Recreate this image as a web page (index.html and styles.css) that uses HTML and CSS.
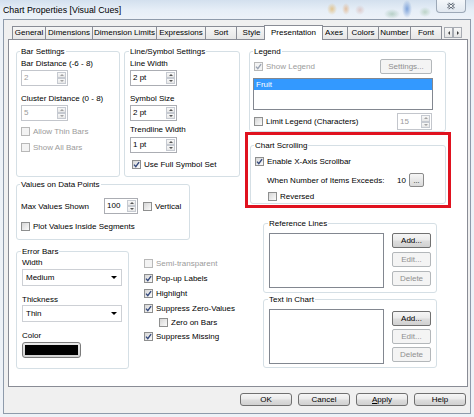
FILE: index.html
```html
<!DOCTYPE html>
<html>
<head>
<meta charset="utf-8">
<title>Chart Properties</title>
<link rel="stylesheet" href="styles.css">
</head>
<body>
<div class="window">
  <div class="titlebar">
    <span class="title">Chart Properties [Visual Cues]</span>
    <div class="close">
      <svg width="10" height="8" viewBox="0 0 10 8"><path d="M2 1.5 L8 6.5 M8 1.5 L2 6.5" stroke="#5a6573" stroke-width="2.6" fill="none"/><path d="M2 1.5 L8 6.5 M8 1.5 L2 6.5" stroke="#ffffff" stroke-width="1" fill="none"/></svg>
    </div>
  </div>
  <div class="client">
    <div class="tabs">
      <div class="tab t1">General</div>
      <div class="tab t2">Dimensions</div>
      <div class="tab t3">Dimension Limits</div>
      <div class="tab t4">Expressions</div>
      <div class="tab t5">Sort</div>
      <div class="tab t6">Style</div>
      <div class="tab sel">Presentation</div>
      <div class="tab t8">Axes</div>
      <div class="tab t9">Colors</div>
      <div class="tab t10">Number</div>
      <div class="tab t11">Font</div>
      <div class="tabscroll"><span class="ts ts-left"></span><span class="ts ts-right"></span></div>
    </div>
    <div class="panel">
      <div class="col-left">
        <div class="row1">
          <div class="grp g-bar">
            <div class="gtitle">Bar Settings</div>
            <div class="lbl mt1">Bar Distance (-6 - 8)</div>
            <div class="spin dis w47 mt1"><span class="val">2</span><span class="arr"><i class="up"></i><i class="dn"></i></span></div>
            <div class="lbl mt7">Cluster Distance (0 - 8)</div>
            <div class="spin dis w47 mt1"><span class="val">5</span><span class="arr"><i class="up"></i><i class="dn"></i></span></div>
            <div class="row mt5 gray"><span class="cb dis"></span>Allow Thin Bars</div>
            <div class="row mt5 gray"><span class="cb dis"></span>Show All Bars</div>
          </div>
          <div class="grp g-line">
            <div class="gtitle">Line/Symbol Settings</div>
            <div class="lbl mt1">Line Width</div>
            <div class="spin w47 mt1"><span class="val">2 pt</span><span class="arr"><i class="up"></i><i class="dn"></i></span></div>
            <div class="lbl mt7">Symbol Size</div>
            <div class="spin w47 mt1"><span class="val">2 pt</span><span class="arr"><i class="up"></i><i class="dn"></i></span></div>
            <div class="lbl mt3">Trendline Width</div>
            <div class="spin w47 mt2"><span class="val">1 pt</span><span class="arr"><i class="up"></i><i class="dn"></i></span></div>
            <div class="row mt6 ind2"><span class="cb"><svg viewBox="0 0 7 7"><path d="M1 3.6 L2.8 5.6 L6.1 1.2"/></svg></span>Use Full Symbol Set</div>
          </div>
        </div>
        <div class="grp g-values">
          <div class="gtitle">Values on Data Points</div>
          <div class="vrow">
            <span class="vlabel">Max Values Shown</span>
            <div class="spin w34"><span class="val">100</span><span class="arr"><i class="up"></i><i class="dn"></i></span></div>
            <span class="row ml5"><span class="cb"></span>Vertical</span>
          </div>
          <div class="row mt7"><span class="cb"></span>Plot Values Inside Segments</div>
        </div>
        <div class="row-err">
          <div class="grp g-err">
            <div class="gtitle">Error Bars</div>
            <div class="lbl">Width</div>
            <div class="combo mt1"><span>Medium</span><i class="drop"></i></div>
            <div class="lbl mt8">Thickness</div>
            <div class="combo"><span>Thin</span><i class="drop"></i></div>
            <div class="lbl mt8">Color</div>
            <div class="colorbtn mt1"><span></span></div>
          </div>
          <div class="cbcol">
            <div class="row r15 gray"><span class="cb dis"></span>Semi-transparent</div>
            <div class="row r15"><span class="cb"><svg viewBox="0 0 7 7"><path d="M1 3.6 L2.8 5.6 L6.1 1.2"/></svg></span>Pop-up Labels</div>
            <div class="row r15"><span class="cb"><svg viewBox="0 0 7 7"><path d="M1 3.6 L2.8 5.6 L6.1 1.2"/></svg></span>Highlight</div>
            <div class="row r15"><span class="cb"><svg viewBox="0 0 7 7"><path d="M1 3.6 L2.8 5.6 L6.1 1.2"/></svg></span>Suppress Zero-Values</div>
            <div class="row r13 ind15"><span class="cb"></span>Zero on Bars</div>
            <div class="row r15"><span class="cb"><svg viewBox="0 0 7 7"><path d="M1 3.6 L2.8 5.6 L6.1 1.2"/></svg></span>Suppress Missing</div>
          </div>
        </div>
      </div>
      <div class="col-right">
        <div class="grp g-legend">
          <div class="gtitle">Legend</div>
          <div class="lrow mt2">
            <span class="row gray"><span class="cb dis"><svg viewBox="0 0 7 7"><path d="M1 3.6 L2.8 5.6 L6.1 1.2"/></svg></span>Show Legend</span>
            <span class="btn dis w52">Settings...</span>
          </div>
          <div class="list l-legend mt4"><div class="item-sel">Fruit</div></div>
          <div class="lrow2 mt3">
            <span class="row"><span class="cb"></span>Limit Legend (Characters)</span>
            <div class="spin dis w35 h17"><span class="val">15</span><span class="arr"><i class="up"></i><i class="dn"></i></span></div>
          </div>
        </div>
        <div class="hl">
          <div class="grp g-scroll">
            <div class="gtitle">Chart Scrolling</div>
            <div class="row mt5"><span class="cb"><svg viewBox="0 0 7 7"><path d="M1 3.6 L2.8 5.6 L6.1 1.2"/></svg></span>Enable X-Axis Scrollbar</div>
            <div class="nrow mt6"><span class="nlabel">When Number of Items Exceeds:</span><span class="num">10</span><span class="dots">...</span></div>
            <div class="row mt4 ind13"><span class="cb"></span>Reversed</div>
          </div>
        </div>
        <div class="grp g-ref">
          <div class="gtitle">Reference Lines</div>
          <div class="lb-row mt4">
            <div class="list l-box"></div>
            <div class="btncol gap4">
              <span class="btn w39">Add...</span>
              <span class="btn dis w39">Edit...</span>
              <span class="btn dis w39">Delete</span>
            </div>
          </div>
        </div>
        <div class="grp g-text">
          <div class="gtitle">Text in Chart</div>
          <div class="lb-row mt4">
            <div class="list l-box"></div>
            <div class="btncol gap3 mt2">
              <span class="btn w39">Add...</span>
              <span class="btn dis w39">Edit...</span>
              <span class="btn dis w39">Delete</span>
            </div>
          </div>
        </div>
      </div>
    </div>
    <div class="buttons">
      <span class="btn bb">OK</span>
      <span class="btn bb">Cancel</span>
      <span class="btn bb"><u>A</u>pply</span>
      <span class="btn bb">Help</span>
    </div>
  </div>
</div>
</body>
</html>
```

FILE: styles.css
```css
* { box-sizing: border-box; }
html, body { margin: 0; padding: 0; background: #ffffff; }

.window {
  width: 474px;
  height: 417px;
  overflow: hidden;
  display: flex;
  flex-direction: column;
  font-family: "Liberation Sans", Arial, sans-serif;
  font-size: 8px;
  color: #000000;
  background:
    radial-gradient(5px 6px at 332px 9px, rgba(225, 165, 60, 0.55), rgba(225, 165, 60, 0)),
    radial-gradient(4px 6px at 346px 9px, rgba(225, 140, 60, 0.45), rgba(225, 140, 60, 0)),
    radial-gradient(5px 5px at 360px 10px, rgba(200, 120, 100, 0.3), rgba(200, 120, 100, 0)),
    radial-gradient(8px 5px at 392px 14px, rgba(90, 150, 110, 0.35), rgba(90, 150, 110, 0)),
    radial-gradient(5px 9px at 407px 9px, rgba(60, 115, 200, 0.6), rgba(60, 115, 200, 0)),
    radial-gradient(6px 5px at 425px 12px, rgba(90, 150, 90, 0.3), rgba(90, 150, 90, 0)),
    linear-gradient(#d3e0ee 0, #e6eef7 10px, #edf2f8 19px, #eef2f7 100%);
}

.titlebar {
  height: 19px;
  flex: none;
  display: flex;
  justify-content: space-between;
  align-items: flex-start;
  padding-left: 3px;
}
.title { font-size: 8.8px; line-height: 14px; padding-top: 3px; color: #000; }
.close {
  width: 30px;
  height: 13px;
  margin-right: 8px;
  border: 1px solid #9ca8b7;
  border-top: none;
  border-radius: 0 0 4px 4px;
  background: linear-gradient(#f4f7fa, #e1e8f0);
  display: flex;
  align-items: center;
  justify-content: center;
}

.client {
  margin: 0 3px;
  height: 395px;
  border: 1px solid #8e9bab;
  background: #f0f0f0;
  padding: 5px 2px 0 4px;
}

/* tabs */
.tabs { display: flex; align-items: flex-end; height: 14px; padding-left: 4px; }
.tab {
  height: 13px;
  border: 1px solid #898c95;
  border-bottom: none;
  margin-right: -1px;
  background: linear-gradient(#f6f6f6, #e6e6e6);
  text-align: center;
  line-height: 12px;
  white-space: nowrap;
  color: #000;
}
.t1 { width: 34px; }
.t2 { width: 48px; }
.t3 { width: 65px; }
.t4 { width: 50px; }
.t5 { width: 32px; }
.t6 { width: 31px; }
.tab.sel {
  width: 59px;
  height: 15px;
  margin: 0 -3px -1px -2px;
  background: #ffffff;
  position: relative;
  z-index: 1;
  line-height: 13px;
}
.t8 { width: 28px; }
.t9 { width: 32px; }
.t10 { width: 33px; }
.t11 { width: 32px; }
.tabscroll { display: flex; gap: 0; margin-left: 3px; margin-bottom: 1px; }
.ts {
  width: 9px;
  height: 11px;
  border: 1px solid #a7abb2;
  background: linear-gradient(#f7f7f7, #e4e4e4);
  display: flex;
  align-items: center;
  justify-content: center;
}
.ts-left::before { content: ""; border-top: 2px solid transparent; border-bottom: 2px solid transparent; border-right: 2px solid #404040; }
.ts-right::before { content: ""; border-top: 2px solid transparent; border-bottom: 2px solid transparent; border-left: 2px solid #404040; }

.panel {
  height: 348px;
  border: 1px solid #898c95;
  background: #ffffff;
  display: flex;
  padding: 11px 0 0 7px;
}

.col-left { width: 224px; flex: none; }
.col-right { width: 206px; flex: none; margin-left: 5px; }

/* groups */
.grp { border: 1px solid #d5dfe5; border-radius: 3px; }
.gtitle {
  display: table;
  margin: -6px 0 0 -1px;
  padding: 0 1px;
  background: #ffffff;
  line-height: 11px;
  white-space: nowrap;
}
.lbl { line-height: 11px; height: 11px; white-space: nowrap; }
.row { display: flex; align-items: center; height: 11px; white-space: nowrap; }
.gray { color: #9b9b9b; }

.mt1 { margin-top: 1px; }
.mt2 { margin-top: 2px; }
.mt3 { margin-top: 3px; }
.mt4 { margin-top: 4px; }
.mt5 { margin-top: 5px; }
.mt6 { margin-top: 6px; }
.mt7 { margin-top: 7px; }
.mt8 { margin-top: 8px; }
.ml5 { margin-left: 5px; }
.ind2 { padding-left: 2px; }
.ind13 { padding-left: 13px; }
.ind15 { padding-left: 15px; }

/* checkbox */
.cb {
  width: 9px;
  height: 9px;
  flex: none;
  border: 1px solid #8e8f8f;
  background: linear-gradient(135deg, #d6d6d6, #fbfbfb);
  margin-right: 3px;
  display: flex;
}
.cb svg { width: 7px; height: 7px; }
.cb path { fill: none; stroke: #34497c; stroke-width: 1.4; }
.cb.dis { border-color: #b8b8b8; background: #f3f3f3; }
.cb.dis path { stroke: #9aa3b2; }

/* spinner */
.spin { height: 16px; display: flex; border: 1px solid #abadb3; background: #ffffff; flex: none; }
.spin .val { flex: 1; padding-left: 2px; line-height: 14px; color: #000000; }
.spin.dis { border-color: #c3c6cc; }
.spin.dis .val { color: #9b9b9b; }
.spin .arr { width: 10px; display: flex; flex-direction: column; padding: 1px 1px 1px 0; }
.spin .arr i {
  flex: 1;
  border: 1px solid #c6cad1;
  background: linear-gradient(#f8f8f8, #e7e7e7);
  display: flex;
  align-items: center;
  justify-content: center;
}
.spin .arr i.up::before { content: ""; border-left: 2px solid transparent; border-right: 2px solid transparent; border-bottom: 2px solid #555555; }
.spin .arr i.dn::before { content: ""; border-left: 2px solid transparent; border-right: 2px solid transparent; border-top: 2px solid #555555; }
.spin.dis .arr i::before { opacity: 0.5; }
.w47 { width: 47px; }
.w34 { width: 34px; }
.w35 { width: 35px; }
.h17 { height: 17px; }
.h17 .val { line-height: 15px; }

/* group specifics */
.row1 { display: flex; gap: 4px; }
.g-bar { width: 104px; height: 126px; padding: 0 4px; }
.g-line { width: 116px; height: 126px; padding: 0 5px; }
.g-values { width: 174px; height: 56px; margin-top: 7px; padding: 0 4px; }
.vrow { display: flex; align-items: center; height: 16px; margin-top: 8px; }
.vlabel { width: 83px; flex: none; white-space: nowrap; }

.row-err { display: flex; align-items: flex-start; margin-top: 11px; }
.g-err { width: 113px; height: 118px; padding: 0 5px; flex: none; }
.combo {
  width: 100px;
  height: 17px;
  border: 1px solid #cdd0d5;
  background: #ffffff;
  display: flex;
  align-items: center;
  justify-content: space-between;
  padding: 0 4px 0 3px;
}
.drop { border-left: 3px solid transparent; border-right: 3px solid transparent; border-top: 3px solid #000000; }
.colorbtn {
  width: 59px;
  height: 16px;
  border: 1px solid #7b7b7b;
  border-radius: 3px;
  background: linear-gradient(#e9e9e9, #d2d2d2);
  padding: 2px;
}
.colorbtn span { display: block; height: 100%; background: #000000; }

.cbcol { margin-left: 15px; padding-top: 5px; display: flex; flex-direction: column; }
.row.r15 { height: 15px; }
.row.r13 { height: 13px; }

/* right column */
.g-legend { width: 197px; height: 81px; margin-left: 4px; padding: 0 13px 0 4px; }
.lrow { display: flex; align-items: center; justify-content: space-between; height: 15px; }
.lrow2 { display: flex; align-items: center; justify-content: space-between; height: 17px; }
.list { border: 1px solid #828790; background: #ffffff; }
.l-legend { height: 32px; margin: 4px -1px 0; }
.item-sel { background: #3399ff; color: #ffffff; height: 11px; line-height: 11px; padding-left: 2px; }

.hl {
  width: 206px;
  height: 76px;
  border: 3px solid #e0121f;
  padding: 10px 0 0 2px;
}
.g-scroll { width: 196px; height: 59px; padding: 0 4px; }
.nrow { display: flex; align-items: center; height: 14px; padding: 0 17px 0 12px; white-space: nowrap; }
.nlabel { flex: 1; }
.num { margin-right: 3px; }
.dots {
  width: 15px;
  height: 14px;
  border: 1px solid #8a8a8a;
  border-radius: 2px;
  background: linear-gradient(#f6f6f6, #dadada);
  text-align: center;
  line-height: 14px;
  font-size: 7px;
}

.g-ref { width: 174px; height: 70px; margin: 15px 0 0 18px; padding: 0 5px; }
.g-text { width: 174px; height: 69px; margin: 6px 0 0 18px; padding: 0 5px; }
.lb-row { display: flex; align-items: flex-start; }
.l-box { width: 115px; height: 55px; flex: none; }
.btncol { display: flex; flex-direction: column; margin-left: 8px; }
.gap4 { gap: 4px; }
.gap3 { gap: 3px; }

/* buttons */
.btn {
  display: block;
  height: 15px;
  border: 1px solid #707070;
  border-radius: 2px;
  background: linear-gradient(#f6f6f6, #ebebeb 45%, #dddddd 55%, #d0d0d0);
  text-align: center;
  line-height: 13px;
  color: #000000;
  white-space: nowrap;
}
.btn.dis { border-color: #b3b7ba; background: #f4f4f4; color: #8f8f8f; }
.w39 { width: 39px; }
.w52 { width: 52px; }

.buttons { display: flex; justify-content: flex-end; gap: 6px; margin-top: 6px; padding-right: 2px; }
.btn.bb { width: 52px; height: 13px; line-height: 11px; border-radius: 3px; }
```
